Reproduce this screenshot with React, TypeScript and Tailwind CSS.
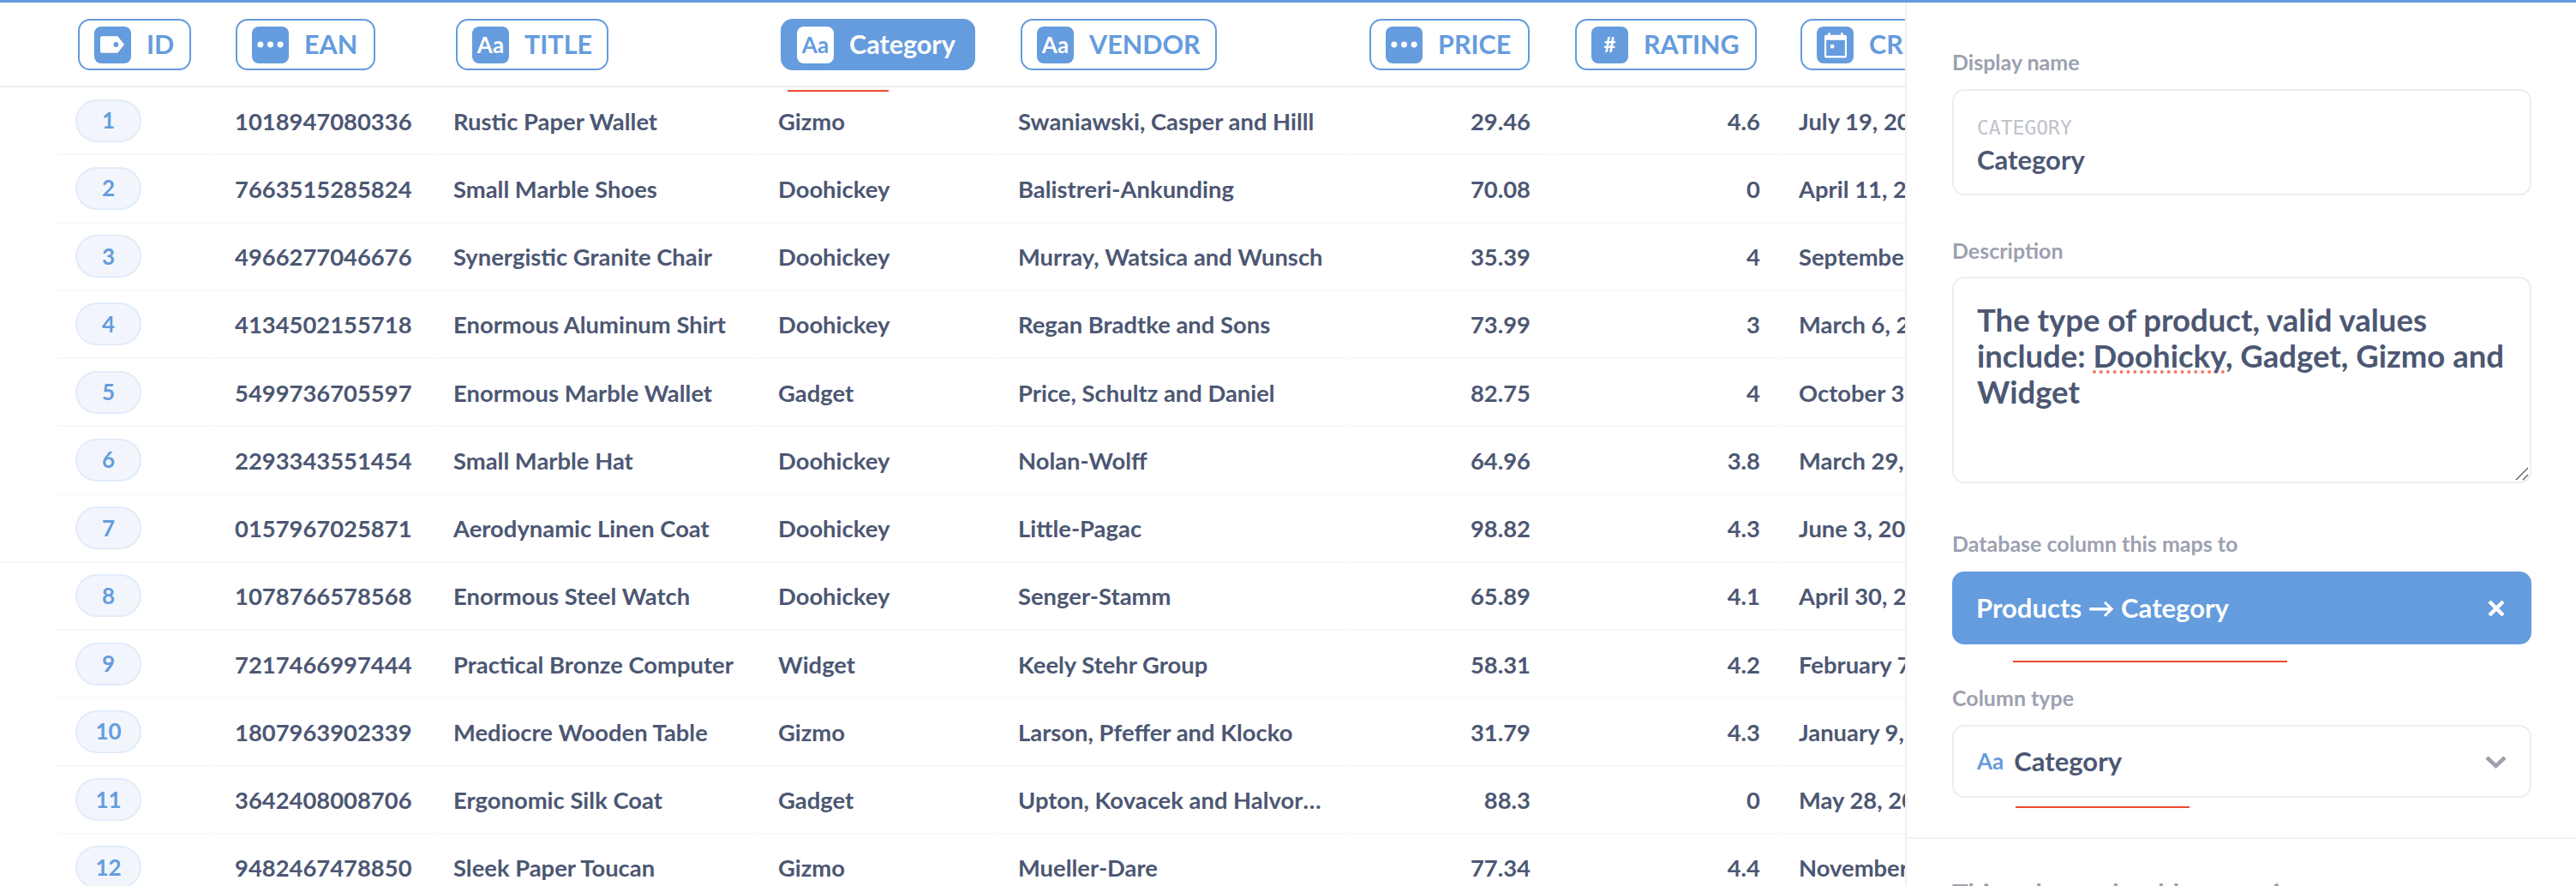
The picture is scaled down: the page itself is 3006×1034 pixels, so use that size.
const rows = [
  ["1", "1018947080336", "Rustic Paper Wallet", "Gizmo", "Swaniawski, Casper and Hilll", "29.46", "4.6", "July 19, 2017"],
  ["2", "7663515285824", "Small Marble Shoes", "Doohickey", "Balistreri-Ankunding", "70.08", "0", "April 11, 2018"],
  ["3", "4966277046676", "Synergistic Granite Chair", "Doohickey", "Murray, Watsica and Wunsch", "35.39", "4", "September 8, 2018"],
  ["4", "4134502155718", "Enormous Aluminum Shirt", "Doohickey", "Regan Bradtke and Sons", "73.99", "3", "March 6, 2018"],
  ["5", "5499736705597", "Enormous Marble Wallet", "Gadget", "Price, Schultz and Daniel", "82.75", "4", "October 3, 2017"],
  ["6", "2293343551454", "Small Marble Hat", "Doohickey", "Nolan-Wolff", "64.96", "3.8", "March 29, 2017"],
  ["7", "0157967025871", "Aerodynamic Linen Coat", "Doohickey", "Little-Pagac", "98.82", "4.3", "June 3, 2017"],
  ["8", "1078766578568", "Enormous Steel Watch", "Doohickey", "Senger-Stamm", "65.89", "4.1", "April 30, 2018"],
  ["9", "7217466997444", "Practical Bronze Computer", "Widget", "Keely Stehr Group", "58.31", "4.2", "February 7, 2019"],
  ["10", "1807963902339", "Mediocre Wooden Table", "Gizmo", "Larson, Pfeffer and Klocko", "31.79", "4.3", "January 9, 2018"],
  ["11", "3642408008706", "Ergonomic Silk Coat", "Gadget", "Upton, Kovacek and Halvorson", "88.3", "0", "May 28, 2018"],
  ["12", "9482467478850", "Sleek Paper Toucan", "Gizmo", "Mueller-Dare", "77.34", "4.4", "November 12, 2017"],
];

const LabelIcon = () => (
  <svg viewBox="0 0 30 20" className="w-[29px] h-[20px]">
    <path d="M2 0H21L29 10L21 20H2Q0 20 0 18V2Q0 0 2 0Z" fill="currentColor" />
    <circle cx="19" cy="10" r="3" fill="#659cdd" />
  </svg>
);

const DotsIcon = () => (
  <svg viewBox="0 0 32 8" className="w-[31px] h-[8px]">
    <circle cx="4" cy="4" r="3.6" fill="currentColor" />
    <circle cx="16" cy="4" r="3.6" fill="currentColor" />
    <circle cx="28" cy="4" r="3.6" fill="currentColor" />
  </svg>
);

const CalendarIcon = () => (
  <svg viewBox="0 0 30 36" className="w-[26px] h-[32px]">
    <path d="M5 2H8V5H22V2H25V5H28Q30 5 30 7V33Q30 36 27 36H3Q0 36 0 33V7Q0 5 2 5H5Z" fill="currentColor" />
    <rect x="2.5" y="12" width="25" height="21" fill="#659cdd" />
    <rect x="8" y="18" width="5" height="5" fill="currentColor" />
  </svg>
);

const TypeIcon = ({ children, active }: { children: React.ReactNode; active?: boolean }) => (
  <div
    className={`w-[43px] h-[43px] rounded-[8px] flex items-center justify-center shrink-0 ${
      active ? "bg-white text-[#659cdd]" : "bg-[#659cdd] text-white"
    }`}
  >
    {children}
  </div>
);

const Aa = () => <span className="text-[26px] font-bold leading-none">Aa</span>;

const HeaderBadge = ({ icon, label, className, active }: { icon: React.ReactNode; label: string; className: string; active?: boolean }) => (
  <div
    className={`h-[60px] rounded-[14px] border-2 border-[#659cdd] flex items-center gap-[18px] pl-[17px] shrink-0 ${className} ${
      active ? "bg-[#659cdd] text-white" : "bg-white text-[#659cdd]"
    }`}
  >
    {icon}
    <span className="text-[30.5px] font-bold whitespace-nowrap">{label}</span>
  </div>
);

const FieldLabel = ({ children }: { children: React.ReactNode }) => (
  <div className="text-[25px] font-bold text-[#9ca1b0] leading-[30px]">{children}</div>
);

export default function App() {
  return (
    <div className="w-[3006px] h-[1034px] overflow-hidden bg-white flex flex-col font-['Lato',sans-serif] relative">
      <div className="h-[3px] bg-[#659cdd] shrink-0" />
      <div className="flex flex-1 min-h-0">
        {/* Table */}
        <div className="w-[2223px] shrink-0 overflow-hidden">
          <div className="h-[99px] border-b-2 border-[#eeeeee] flex items-start pt-[19px] pl-[91px] w-[2400px] relative">
            <HeaderBadge className="w-[132px] mr-[52px]" icon={<TypeIcon><LabelIcon /></TypeIcon>} label="ID" />
            <HeaderBadge className="w-[163px] mr-[94px]" icon={<TypeIcon><DotsIcon /></TypeIcon>} label="EAN" />
            <HeaderBadge className="w-[178px] mr-[201px]" icon={<TypeIcon><Aa /></TypeIcon>} label="TITLE" />
            <HeaderBadge className="w-[227px] mr-[53px]" active icon={<TypeIcon active><Aa /></TypeIcon>} label="Category" />
            <HeaderBadge className="w-[229px] mr-[178px]" icon={<TypeIcon><Aa /></TypeIcon>} label="VENDOR" />
            <HeaderBadge className="w-[187px] mr-[53px]" icon={<TypeIcon><DotsIcon /></TypeIcon>} label="PRICE" />
            <HeaderBadge className="w-[212px] mr-[51px]" icon={<TypeIcon><span className="text-[24px] font-bold leading-none">#</span></TypeIcon>} label="RATING" />
            <HeaderBadge className="w-[280px]" icon={<TypeIcon><CalendarIcon /></TypeIcon>} label="CREATED AT" />
            <div className="absolute left-[919px] top-[102px] w-[118px] h-[2px] bg-[#ee4a2e]" />
          </div>
          {rows.map((row) => (
            <div key={row[0]} className="h-[79.25px] flex text-[27.4px] font-bold text-[#4c5773] w-[2400px]">
              <div className={`w-[67px] h-full ${row[0] === "7" ? "border-b-2 border-[#f8f8f8]" : ""}`} />
              <div className="w-[182px] mr-[2px] h-full border-b-2 border-[#f8f8f8] flex items-center pl-[21px]">
                <div className="w-[77px] h-[50px] rounded-[25px] bg-[#f2f6fc] border-2 border-[#e2ecf8] text-[#659cdd] flex items-center justify-center text-[26px]">
                  {row[0]}
                </div>
              </div>
              <div className="w-[254px] mr-[2px] h-full border-b-2 border-[#f8f8f8] flex items-center pl-[23px] pt-[1px]">{row[1]}</div>
              <div className="w-[378px] mr-[2px] h-full border-b-2 border-[#f8f8f8] flex items-center pl-[22px] pt-[1px]">{row[2]}</div>
              <div className="w-[278px] mr-[2px] h-full border-b-2 border-[#f8f8f8] flex items-center pl-[21px] pt-[1px]">{row[3]}</div>
              <div className="w-[403px] mr-[2px] h-full border-b-2 border-[#f8f8f8] flex items-center pl-[21px] pt-[1px]">
                <span className="w-[362px] truncate">{row[4]}</span>
              </div>
              <div className="w-[238px] mr-[2px] h-full border-b-2 border-[#f8f8f8] flex items-center justify-end pr-[24px] pt-[1px]">{row[5]}</div>
              <div className="w-[263px] mr-[2px] h-full border-b-2 border-[#f8f8f8] flex items-center justify-end pr-[21px] pt-[1px]">{row[6]}</div>
              <div className="w-[300px] h-full border-b-2 border-[#f8f8f8] flex items-center pl-[22px] pt-[1px] whitespace-nowrap">{row[7]}</div>
            </div>
          ))}
        </div>

        {/* Field settings panel */}
        <div className="flex-1 border-l-2 border-[#eef0f3] bg-white min-w-0">
          <div className="pl-[53px] pr-[52px] pt-[54px]">
            <FieldLabel>Display name</FieldLabel>
            <div className="mt-[17px] h-[124px] rounded-[14px] border-2 border-[#eeeeee] px-[27px] pt-[28px]">
              <div className="text-[23px] leading-[30px] text-[#c0c3cb] font-normal font-['DejaVu_Sans_Mono',monospace]">CATEGORY</div>
              <div className="text-[31px] leading-[38px] mt-[3px] font-bold text-[#4c5773]">Category</div>
            </div>

            <div className="mt-[49px]"><FieldLabel>Description</FieldLabel></div>
            <div className="mt-[16px] h-[241px] rounded-[14px] border-2 border-[#eeeeee] pl-[27px] pr-[8px] pt-[27px] relative">
              <div className="text-[36.5px] leading-[42px] font-bold text-[#4c5773]">
                The type of product, valid values include:{" "}
                <span className="underline decoration-dotted decoration-[#f2796b] decoration-[4px] underline-offset-[3px] [text-decoration-skip-ink:none]">Doohicky</span>
                , Gadget, Gizmo and Widget
              </div>
              <svg viewBox="0 0 16 16" className="absolute right-[1px] bottom-[1px] w-[16px] h-[16px] text-[#555555]">
                <path d="M1 15L15 1M9 15L15 9" stroke="currentColor" strokeWidth="1.2" fill="none" />
              </svg>
            </div>

            <div className="mt-[55px]"><FieldLabel>Database column this maps to</FieldLabel></div>
            <div className="mt-[18px] h-[85px] rounded-[14px] bg-[#659cdd] flex items-center justify-between pl-[28px] pr-[31px] text-white text-[31px] font-bold">
              <span>Products → Category</span>
              <svg viewBox="0 0 20 20" className="w-[20px] h-[20px]">
                <path d="M2 2L18 18M18 2L2 18" stroke="currentColor" strokeWidth="4.5" fill="none" />
              </svg>
            </div>
            <div className="ml-[71px] mt-[19px] w-[320px] h-[2px] bg-[#ee4a2e]" />

            <div className="mt-[26px]"><FieldLabel>Column type</FieldLabel></div>
            <div className="mt-[17px] h-[85px] rounded-[14px] border-2 border-[#eeeeee] flex items-center pl-[27px] pr-[27px] text-[#4c5773] text-[31px] font-bold">
              <span className="text-[#659cdd] text-[26px] mr-[12px]">Aa</span>
              <span>Category</span>
              <svg viewBox="0 0 25 16" className="w-[25px] h-[16px] ml-auto text-[#9ca1b0]">
                <path d="M2 3L12.5 13L23 3" stroke="currentColor" strokeWidth="4.5" fill="none" />
              </svg>
            </div>
            <div className="ml-[74px] mt-[10px] w-[203px] h-[2px] bg-[#ee4a2e]" />
          </div>
          <div className="mt-[34px] border-t-2 border-[#eef0f3] pl-[53px] pt-[45px] text-[31px] font-bold text-[#9ca1b0] leading-[37px]">
            This column should appear in…
          </div>
        </div>
      </div>
    </div>
  );
}
